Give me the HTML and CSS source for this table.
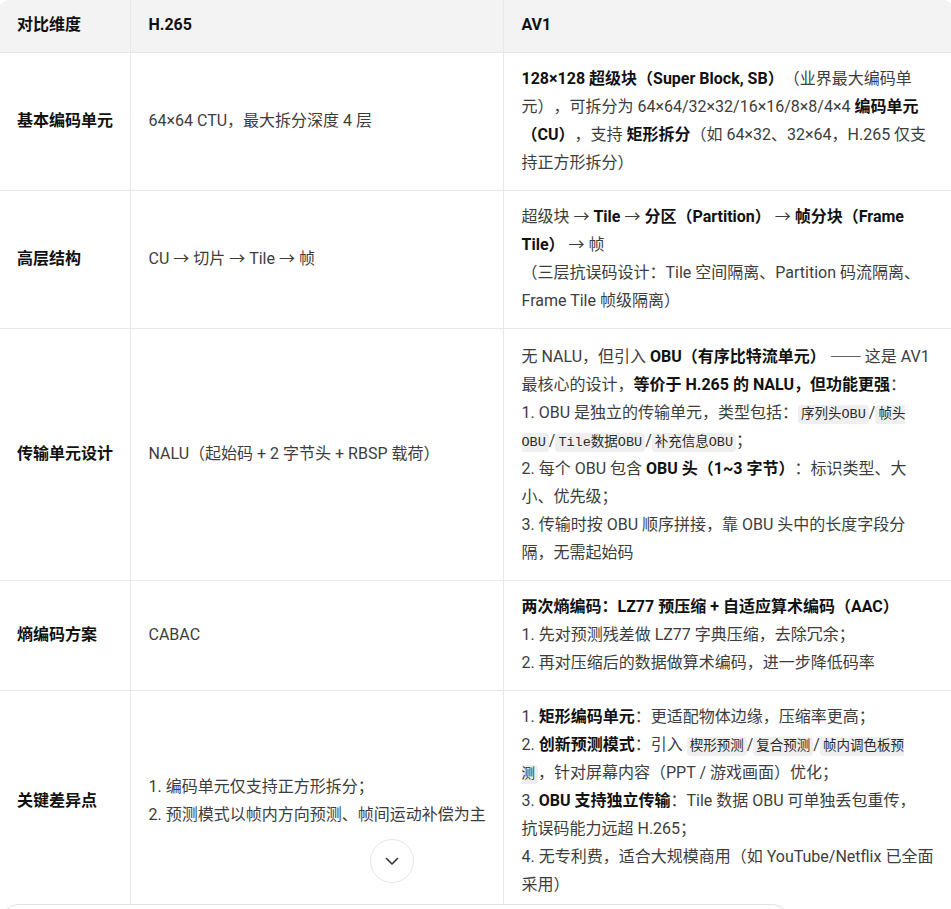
FILE: index.html
```html
<!DOCTYPE html>
<html lang="zh-CN">
<head>
<meta charset="utf-8">
<title>H.265 vs AV1</title>
<link rel="stylesheet" href="styles.css">
</head>
<body>
<div class="page">
  <div class="table-wrap">
    <table class="cmp">
      <colgroup>
        <col class="c1"><col class="c2"><col class="c3">
      </colgroup>
      <thead>
        <tr><th>对比维度</th><th>H.265</th><th>AV1</th></tr>
      </thead>
      <tbody>
        <tr>
          <td class="label">基本编码单元</td>
          <td>64×64 CTU，最大拆分深度 4 层</td>
          <td><b>128×128 超级块（Super Block, SB）</b>（业界最大编码单元），可拆分为 64×64/32×32/16×16/8×8/4×4 <b>编码单元<br>（CU）</b>，支持 <b>矩形拆分</b>（如 64×32、32×64，H.265 仅支持正方形拆分）</td>
        </tr>
        <tr>
          <td class="label">高层结构</td>
          <td>CU → 切片 → Tile → 帧</td>
          <td>超级块 → <b>Tile</b> → <b>分区（Partition）</b> → <b>帧分块（Frame<br>Tile）</b> → 帧<br>（三层抗误码设计：Tile 空间隔离、Partition 码流隔离、Frame Tile 帧级隔离）</td>
        </tr>
        <tr>
          <td class="label">传输单元设计</td>
          <td>NALU（起始码 + 2 字节头 + RBSP 载荷）</td>
          <td>无 NALU，但引入 <b>OBU（有序比特流单元）</b> <span class="dash">——</span> 这是 AV1 最核心的设计，<b>等价于 H.265 的 NALU，但功能更强</b>：<br>1. OBU 是独立的传输单元，类型包括：<code>序列头OBU</code>/<code>帧头<br>OBU</code>/<code>Tile数据OBU</code>/<code>补充信息OBU</code>；<br>2. 每个 OBU 包含 <b>OBU 头（1~3 字节）</b>：标识类型、大小、优先级；<br>3. 传输时按 OBU 顺序拼接，靠 OBU 头中的长度字段分隔，无需起始码</td>
        </tr>
        <tr>
          <td class="label">熵编码方案</td>
          <td>CABAC</td>
          <td><b>两次熵编码：LZ77 预压缩 + 自适应算术编码（AAC）</b><br>1. 先对预测残差做 LZ77 字典压缩，去除冗余；<br>2. 再对压缩后的数据做算术编码，进一步降低码率</td>
        </tr>
        <tr>
          <td class="label">关键差异点</td>
          <td class="nowrap">1. 编码单元仅支持正方形拆分；<br>2. 预测模式以帧内方向预测、帧间运动补偿为主</td>
          <td>1. <b>矩形编码单元</b>：更适配物体边缘，压缩率更高；<br>2. <b>创新预测模式</b>：引入 <code>楔形预测</code>/<code>复合预测</code>/<code>帧内调色板预<br>测</code>，针对屏幕内容（PPT / 游戏画面）优化；<br>3. <b>OBU 支持独立传输</b>：Tile 数据 OBU 可单独丢包重传，<br>抗误码能力远超 H.265；<br>4. 无专利费，适合大规模商用（如 YouTube/Netflix 已全面采用）</td>
        </tr>
      </tbody>
    </table>
  </div>

  <button class="scroll-btn" aria-label="向下滚动">
    <svg width="18" height="18" viewBox="0 0 18 18" fill="none">
      <path d="M3.5 6.5 L9 12 L14.5 6.5" stroke="#333" stroke-width="1.6" stroke-linecap="round" stroke-linejoin="round"/>
    </svg>
  </button>

  <div class="composer"></div>
</div>
</body>
</html>
```

FILE: styles.css
```css
* { box-sizing: border-box; }

html, body {
  margin: 0;
  padding: 0;
  background: #ffffff;
  overflow: hidden;
}

body {
  font-family: "Roboto", "Noto Sans CJK SC", sans-serif;
  font-size: 16px;
  color: #3d3d3d;
  width: 951px;
  height: 909px;
  text-spacing-trim: space-all;
}

.page {
  position: relative;
  width: 951px;
  height: 909px;
  overflow: hidden;
}

.table-wrap {
  margin-left: -2px;
  width: 956px;
  border: 1px solid #e6e6e6;
  border-top: none;
  border-radius: 12px 12px 0 0;
  overflow: hidden;
}

.cmp {
  width: 100%;
  border-collapse: collapse;
  table-layout: fixed;
}

.cmp col.c1 { width: 131px; }
.cmp col.c2 { width: 373px; }
.cmp col.c3 { width: auto; }

.cmp th,
.cmp td {
  padding: 12px 18px;
  line-height: 28px;
  text-align: left;
  vertical-align: middle;
  border: 1px solid #e8e8e8;
}

.cmp tr > :first-child { border-left: none; padding-right: 8px; }
.cmp tr > :last-child { border-right: none; }
.cmp thead th { border-top: none; }

.cmp th {
  background: #f3f3f3;
  color: #111111;
  font-weight: 700;
  height: 52px;
  padding-top: 11px;
  padding-bottom: 12px;
}

.cmp td { padding-top: 12px; padding-bottom: 13px; }

.cmp td.label {
  color: #111111;
  font-weight: 700;
  white-space: nowrap;
}

.cmp td.nowrap { white-space: nowrap; padding-right: 10px; }

.cmp b {
  color: #111111;
  font-weight: 700;
}

.cmp .dash {
  font-family: "Noto Sans CJK SC", sans-serif;
  letter-spacing: -1px;
}

.cmp code {
  font-family: "Liberation Mono", "DejaVu Sans Mono", "Noto Sans CJK SC", monospace;
  font-size: 13.5px;
  line-height: 1;
  background: #efefef;
  border-radius: 4px;
  padding: 2px 3px;
  color: #2b2b2b;
}

.scroll-btn {
  position: absolute;
  left: 370px;
  top: 839px;
  width: 44px;
  height: 44px;
  border-radius: 50%;
  border: 1px solid #e6e6e6;
  background: #ffffff;
  display: flex;
  align-items: center;
  justify-content: center;
  padding: 0;
}

.composer {
  position: absolute;
  left: 1px;
  top: 904px;
  width: 789px;
  height: 60px;
  border: 1px solid #e2e2e2;
  border-radius: 18px;
  background: #ffffff;
}
```
